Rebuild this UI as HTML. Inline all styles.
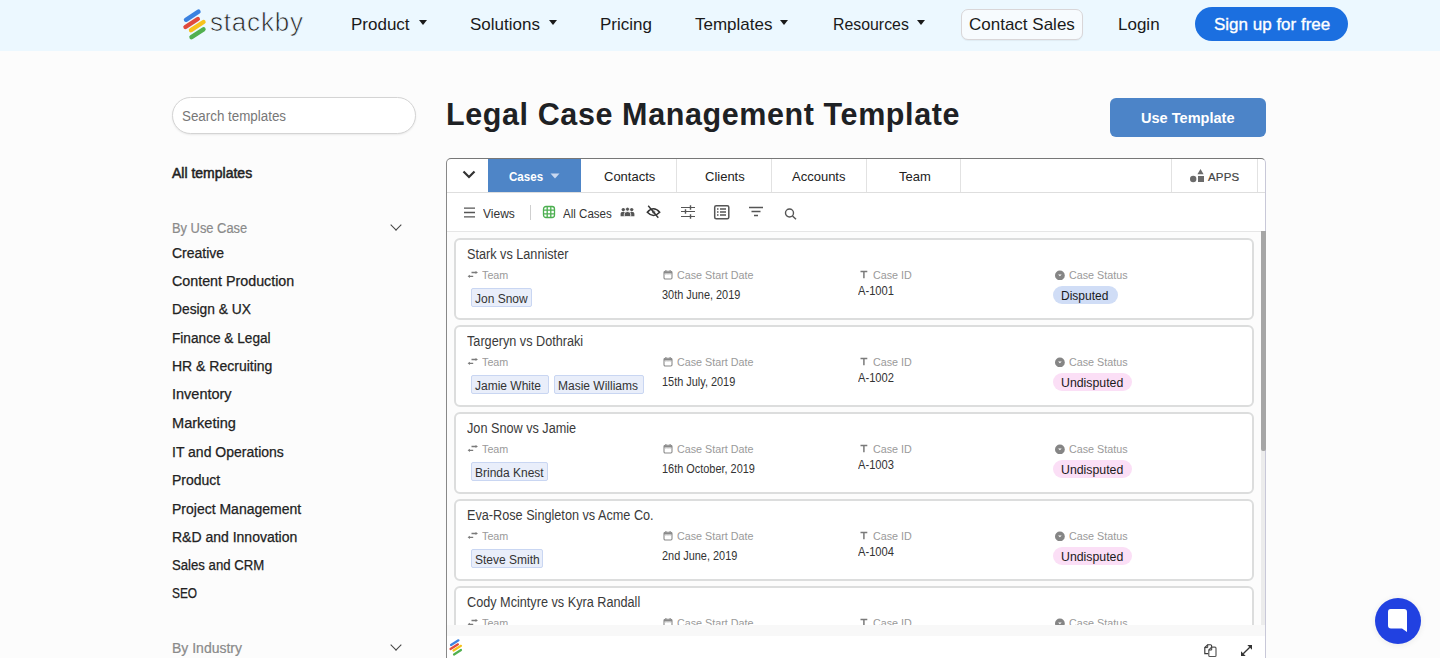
<!DOCTYPE html>
<html><head><meta charset="utf-8">
<style>
*{box-sizing:border-box;margin:0;padding:0}
html,body{width:1440px;height:658px;overflow:hidden;background:#fcfcfc;font-family:"Liberation Sans",sans-serif;color:#222}
.abs{position:absolute;white-space:nowrap}
#nav{position:absolute;left:0;top:0;width:1440px;height:51px;background:#ecf8ff}
.ni{position:absolute;top:15px;font-size:17px;line-height:20px;color:#1a1a1a}
.caret{position:absolute;width:0;height:0;border-left:4px solid transparent;border-right:4px solid transparent;border-top:5px solid #1a1a1a}
#contact{position:absolute;left:961px;top:9px;width:122px;height:31px;border:1px solid #d9d6d8;border-radius:7px;background:#f7fbfe;box-shadow:0 1px 1px rgba(0,0,0,.05)}
#signup{position:absolute;left:1195px;top:7px;width:153px;height:34px;border-radius:17px;background:#1b6fe0;color:#fff}
#search{position:absolute;left:172px;top:97px;width:244px;height:37px;border:1px solid #d4d4d4;border-radius:19px;background:#fff;box-shadow:0 1px 2px rgba(0,0,0,.08)}
.side{position:absolute;left:172px;font-size:14px;line-height:16px;color:#222;-webkit-text-stroke:0.25px #222}
.sec{color:#8a8a8a;-webkit-text-stroke:0.2px #8a8a8a;transform-origin:0 0;transform:scaleX(0.92)}
.chev{position:absolute;width:8px;height:8px;border-right:1.3px solid #444;border-bottom:1.3px solid #444;transform:rotate(45deg)}
#title{position:absolute;left:446px;top:96px;font-size:30.5px;line-height:36px;letter-spacing:0.6px;font-weight:bold;color:#1e2124}
#usebtn{position:absolute;left:1110px;top:98px;width:156px;height:39px;border-radius:6px;background:#4c84c8;color:#fff;font-size:15px;font-weight:bold}
#frame{position:absolute;left:446px;top:158px;width:820px;height:500px;border:1px solid #888;border-top-color:#777;border-right-color:#c8c8d8;border-bottom:none;border-radius:5px 5px 0 0;background:#fff;overflow:hidden}
.tab{top:169px;font-size:13px;line-height:15px;color:#222}
.vdiv{position:absolute;top:159px;width:1px;height:33px;background:#e2e2e2}
.tb{top:207px;font-size:12.5px;line-height:15px;color:#333}
.card{position:absolute;left:7px;width:800px;background:#fff;border:2px solid #dcdddd;border-radius:6px}
.card .ic{position:absolute}
.ct{position:absolute;left:10.5px;top:6px;font-size:14px;line-height:16px;transform-origin:0 0;transform:scaleX(0.905);color:#3a3a3a;white-space:nowrap}
.cl{position:absolute;top:27.5px;font-size:11.5px;line-height:14px;transform-origin:0 0;transform:scaleX(0.935);color:#9a9a9a;white-space:nowrap}
.chip{position:absolute;top:48px;height:19px;background:#e9eefa;border:1px solid #c9d6f2;border-radius:2px;font-size:12px;line-height:20px;color:#333;padding-left:3px;white-space:nowrap}
.cd{position:absolute;left:206px;top:48px;font-size:12px;line-height:14px;transform-origin:0 0;transform:scaleX(0.91);color:#333;white-space:nowrap}
.cid{position:absolute;left:401.5px;top:44px;font-size:12px;line-height:14px;transform-origin:0 0;transform:scaleX(0.93);color:#333;white-space:nowrap}
.pill{position:absolute;left:597px;top:46px;height:18px;border-radius:9px;font-size:12px;line-height:18px;color:#1a1a1a;padding-left:8px;white-space:nowrap}
.pill span{display:inline-block;position:relative;top:1px}
.blue{background:#d0ddf6}.pink{background:#fbdff6}
</style></head>
<body>
<div id="nav">
  <svg class="abs" style="left:180px;top:6px" width="30" height="36" viewBox="0 0 30 36">
    <g stroke-linecap="round" stroke-width="4.4">
      <line x1="6" y1="13.8" x2="18.5" y2="5.6" stroke="#3b82e0"/>
      <line x1="5.5" y1="21" x2="17.8" y2="13" stroke="#e04a3c"/>
      <line x1="11" y1="24.2" x2="23.5" y2="16" stroke="#f7c21c"/>
      <line x1="11.5" y1="31.2" x2="23.5" y2="23.3" stroke="#52b04f"/>
    </g>
  </svg>
  <div class="abs" style="left:210px;top:6.5px;font-size:26px;line-height:30px;color:#222;letter-spacing:0.8px;-webkit-text-stroke:0.7px #ecf8ff">stackby</div>
  <div class="ni" style="left:351px">Product</div><div class="caret" style="left:419px;top:20px"></div>
  <div class="ni" style="left:470px">Solutions</div><div class="caret" style="left:549px;top:20px"></div>
  <div class="ni" style="left:600px">Pricing</div>
  <div class="ni" style="left:695px">Templates</div><div class="caret" style="left:780px;top:20px"></div>
  <div class="ni" style="left:832.5px;transform-origin:0 0;transform:scaleX(0.933)">Resources</div><div class="caret" style="left:917px;top:20px"></div>
  <div id="contact"></div>
  <div class="ni" style="left:969px">Contact Sales</div>
  <div class="ni" style="left:1118px">Login</div>
  <div id="signup"></div>
  <div class="ni" style="left:1214px;color:#fff;-webkit-text-stroke:0.35px #fff">Sign up for free</div>
</div>

<div id="search"></div>
<div class="side" style="left:181.5px;top:108px;color:#777;-webkit-text-stroke:0;transform-origin:0 0;transform:scaleX(0.955)">Search templates</div>
<div class="side" style="top:165px;-webkit-text-stroke:0.5px #222">All templates</div>
<div class="side sec" style="top:220px">By Use Case</div>
<div class="chev" style="left:392px;top:221px"></div>
<div class="side" style="top:245px">Creative</div>
<div class="side" style="top:273px;transform-origin:0 0;transform:scaleX(1.02)">Content Production</div>
<div class="side" style="top:301px;transform-origin:0 0;transform:scaleX(0.985)">Design &amp; UX</div>
<div class="side" style="top:330px;transform-origin:0 0;transform:scaleX(0.975)">Finance &amp; Legal</div>
<div class="side" style="top:358px">HR &amp; Recruiting</div>
<div class="side" style="top:386px;transform-origin:0 0;transform:scaleX(1.035)">Inventory</div>
<div class="side" style="top:415px;transform-origin:0 0;transform:scaleX(1.04)">Marketing</div>
<div class="side" style="top:444px">IT and Operations</div>
<div class="side" style="top:472px">Product</div>
<div class="side" style="top:501px">Project Management</div>
<div class="side" style="top:529px">R&amp;D and Innovation</div>
<div class="side" style="top:557px;transform-origin:0 0;transform:scaleX(0.94)">Sales and CRM</div>
<div class="side" style="top:585px;transform-origin:0 0;transform:scaleX(0.85)">SEO</div>
<div class="side sec" style="top:640px;transform:none">By Industry</div>
<div class="chev" style="left:392px;top:641px"></div>

<div id="title">Legal Case Management Template</div>
<div id="usebtn"></div>
<div class="abs" style="left:1141px;top:109px;font-size:15px;line-height:17px;font-weight:bold;color:#fff;transform-origin:0 0;transform:scaleX(0.97)">Use Template</div>

<div id="frame"></div>
<!-- tab bar -->
<svg class="abs" style="left:462px;top:169px" width="14" height="11" viewBox="0 0 14 11"><path d="M1.5 2.5 L7 8 L12.5 2.5" fill="none" stroke="#333" stroke-width="2.2"/></svg>
<div class="abs" style="left:488px;top:159px;width:93px;height:33px;background:#4e85c7"></div>
<div class="abs tab" style="left:509px;color:#fff;font-weight:bold;transform-origin:0 0;transform:scaleX(0.89)">Cases</div>
<svg class="abs" style="left:550px;top:173px" width="10" height="6" viewBox="0 0 10 6"><path d="M0.5 0.5 L9.5 0.5 L5 5.5 Z" fill="#c9d8f0"/></svg>
<div class="vdiv" style="left:676px"></div>
<div class="vdiv" style="left:771px"></div>
<div class="vdiv" style="left:866px"></div>
<div class="vdiv" style="left:960px"></div>
<div class="vdiv" style="left:1171px"></div>
<div class="vdiv" style="left:1257px"></div>
<div class="abs tab" style="left:604px">Contacts</div>
<div class="abs tab" style="left:705px">Clients</div>
<div class="abs tab" style="left:792px">Accounts</div>
<div class="abs tab" style="left:899px">Team</div>
<svg class="abs" style="left:1189px;top:168px" width="16" height="16" viewBox="0 0 16 16"><circle cx="4.2" cy="11" r="3.2" fill="#6b6b6b"/><path d="M11.5 1 L14.6 6.3 L8.4 6.3 Z" fill="#6b6b6b"/><rect x="9" y="8" width="6" height="6" fill="#6b6b6b"/></svg>
<div class="abs tab" style="left:1208px;top:170px;color:#444;font-size:11.5px;letter-spacing:0.2px;-webkit-text-stroke:0.2px #444">APPS</div>
<div class="abs" style="left:447px;top:192px;width:818px;height:1px;background:#dedede"></div>
<!-- toolbar -->
<svg class="abs" style="left:463px;top:207px" width="13" height="12" viewBox="0 0 13 12"><path d="M1 1.2H12M1 5.5H12M1 9.8H12" stroke="#555" stroke-width="1.3"/></svg>
<div class="abs tb" style="left:483px;transform-origin:0 0;transform:scaleX(0.96)">Views</div>
<div class="abs" style="left:530px;top:205px;width:1px;height:15px;background:#cfcfcf"></div>
<svg class="abs" style="left:542px;top:205px" width="14" height="14" viewBox="0 0 14 14"><rect x="1.5" y="1.5" width="11" height="11" rx="2.5" fill="none" stroke="#4caf50" stroke-width="1.3"/><path d="M5.2 1.5V12.5M8.8 1.5V12.5M1.5 5.2H12.5M1.5 8.8H12.5" stroke="#4caf50" stroke-width="1.3"/></svg>
<div class="abs tb" style="left:563px;transform-origin:0 0;transform:scaleX(0.925)">All Cases</div>
<svg class="abs" style="left:620px;top:207px" width="15" height="10" viewBox="0 0 15 10"><g fill="#555"><circle cx="3.3" cy="2.6" r="1.7"/><circle cx="11.7" cy="2.6" r="1.7"/><path d="M0.6 9.3 V6.8 Q0.6 4.7 3.3 4.7 Q6 4.7 6 6.8 V9.3Z"/><path d="M9 9.3 V6.8 Q9 4.7 11.7 4.7 Q14.4 4.7 14.4 6.8 V9.3Z"/></g><g fill="#555" stroke="#fff" stroke-width="0.8"><circle cx="7.5" cy="2.2" r="2"/><path d="M4.3 9.6 V6.9 Q4.3 4.5 7.5 4.5 Q10.7 4.5 10.7 6.9 V9.6Z"/></g></svg>
<svg class="abs" style="left:646px;top:205px" width="15" height="14" viewBox="0 0 15 14"><path d="M1.3 7.2 Q7.5 0.2 13.7 7.2 Q7.5 13.6 1.3 7.2Z" fill="none" stroke="#333" stroke-width="1.5"/><circle cx="7.6" cy="7" r="1.3" fill="none" stroke="#777" stroke-width="0.9"/><path d="M2.2 0.8 L12.3 12.8" stroke="#333" stroke-width="1.4"/></svg>
<svg class="abs" style="left:681px;top:205px" width="14" height="14" viewBox="0 0 14 14"><path d="M0 2.5H14M0 6.5H14M0 11.5H14" stroke="#555" stroke-width="1.1"/><path d="M9.5 0.3V4.7M4.5 4.3V8.7M9.5 9.3V13.7" stroke="#555" stroke-width="1.4"/></svg>
<svg class="abs" style="left:713px;top:204px" width="17" height="16" viewBox="0 0 17 16"><rect x="1.7" y="1.7" width="14.1" height="13.1" rx="1.5" fill="none" stroke="#555" stroke-width="1.5"/><path d="M4 5H5.5M4 8H5.5M4 11H5.5M7 5H13M7 8H13M7 11H13" stroke="#555" stroke-width="1.4"/></svg>
<svg class="abs" style="left:748px;top:206px" width="16" height="12" viewBox="0 0 16 12"><path d="M1 1.5H15M3.5 5.5H12.5M6 9.5H10" stroke="#555" stroke-width="1.5"/></svg>
<svg class="abs" style="left:784px;top:208px" width="14" height="12" viewBox="0 0 14 12"><circle cx="5.5" cy="5" r="4" fill="none" stroke="#555" stroke-width="1.4"/><path d="M8.5 8 L12 11.2" stroke="#555" stroke-width="1.5"/></svg>
<div class="abs" style="left:447px;top:231px;width:818px;height:1px;background:#e6e6e6"></div>
<!-- scroll area -->
<div class="abs" style="left:447px;top:232px;width:814px;height:393px;background:#fcfcfc;overflow:hidden">
<!--CARDS-->
<div class="card" style="top:6px;height:82px">
<div class="ct">Stark vs Lannister</div>
<svg class="ic" style="left:11px;top:31px" width="12" height="8" viewBox="0 0 12 8"><path d="M4.5 1.5H9M2.2 5.3H6.2" stroke="#7a7a7a" stroke-width="1.3"/><path d="M8.6 -0.1L10.9 1.5L8.6 3.1Z M0.6 5.3L2.9 3.7L2.9 6.9Z" fill="#7a7a7a"/></svg><div class="cl" style="left:25.5px">Team</div>
<svg class="ic" style="left:207px;top:29px" width="10" height="11" viewBox="0 0 10 11"><rect x="1" y="2.2" width="8" height="7.8" rx="1.2" fill="none" stroke="#8a8a8a" stroke-width="1.1"/><path d="M1 3.6H9" stroke="#8a8a8a" stroke-width="1.8"/><path d="M2.9 1V2.8M7.1 1V2.8" stroke="#8a8a8a" stroke-width="1"/><path d="M2.4 5.3h1M4.5 5.3h1M6.6 5.3h1" stroke="#aaa" stroke-width="0.8"/></svg><div class="cl" style="left:221px">Case Start Date</div>
<svg class="ic" style="left:404px;top:30px" width="8" height="9" viewBox="0 0 8 9"><path d="M0.5 1.6H7.3M3.9 1.6V8.3" stroke="#7a7a7a" stroke-width="1.5"/></svg><div class="cl" style="left:416.5px">Case ID</div>
<svg class="ic" style="left:598px;top:29px" width="11" height="11" viewBox="0 0 11 11"><circle cx="5.9" cy="6.4" r="4.9" fill="#858585"/><path d="M4.1 5.4 H7.7 L5.9 7.3Z" fill="#fff"/></svg><div class="cl" style="left:612.5px">Case Status</div>
<div class="chip" style="left:15px;width:61px">Jon Snow</div>
<div class="cd">30th June, 2019</div>
<div class="cid">A-1001</div>
<div class="pill blue" style="width:65px"><span>Disputed</span></div>
</div>
<div class="card" style="top:93px;height:82px">
<div class="ct">Targeryn vs Dothraki</div>
<svg class="ic" style="left:11px;top:31px" width="12" height="8" viewBox="0 0 12 8"><path d="M4.5 1.5H9M2.2 5.3H6.2" stroke="#7a7a7a" stroke-width="1.3"/><path d="M8.6 -0.1L10.9 1.5L8.6 3.1Z M0.6 5.3L2.9 3.7L2.9 6.9Z" fill="#7a7a7a"/></svg><div class="cl" style="left:25.5px">Team</div>
<svg class="ic" style="left:207px;top:29px" width="10" height="11" viewBox="0 0 10 11"><rect x="1" y="2.2" width="8" height="7.8" rx="1.2" fill="none" stroke="#8a8a8a" stroke-width="1.1"/><path d="M1 3.6H9" stroke="#8a8a8a" stroke-width="1.8"/><path d="M2.9 1V2.8M7.1 1V2.8" stroke="#8a8a8a" stroke-width="1"/><path d="M2.4 5.3h1M4.5 5.3h1M6.6 5.3h1" stroke="#aaa" stroke-width="0.8"/></svg><div class="cl" style="left:221px">Case Start Date</div>
<svg class="ic" style="left:404px;top:30px" width="8" height="9" viewBox="0 0 8 9"><path d="M0.5 1.6H7.3M3.9 1.6V8.3" stroke="#7a7a7a" stroke-width="1.5"/></svg><div class="cl" style="left:416.5px">Case ID</div>
<svg class="ic" style="left:598px;top:29px" width="11" height="11" viewBox="0 0 11 11"><circle cx="5.9" cy="6.4" r="4.9" fill="#858585"/><path d="M4.1 5.4 H7.7 L5.9 7.3Z" fill="#fff"/></svg><div class="cl" style="left:612.5px">Case Status</div>
<div class="chip" style="left:15px;width:78px">Jamie White</div>
<div class="chip" style="left:98px;width:90px">Masie Williams</div>
<div class="cd">15th July, 2019</div>
<div class="cid">A-1002</div>
<div class="pill pink" style="width:79px"><span style="transform:scaleX(1.025);transform-origin:0 0">Undisputed</span></div>
</div>
<div class="card" style="top:180px;height:82px">
<div class="ct">Jon Snow vs Jamie</div>
<svg class="ic" style="left:11px;top:31px" width="12" height="8" viewBox="0 0 12 8"><path d="M4.5 1.5H9M2.2 5.3H6.2" stroke="#7a7a7a" stroke-width="1.3"/><path d="M8.6 -0.1L10.9 1.5L8.6 3.1Z M0.6 5.3L2.9 3.7L2.9 6.9Z" fill="#7a7a7a"/></svg><div class="cl" style="left:25.5px">Team</div>
<svg class="ic" style="left:207px;top:29px" width="10" height="11" viewBox="0 0 10 11"><rect x="1" y="2.2" width="8" height="7.8" rx="1.2" fill="none" stroke="#8a8a8a" stroke-width="1.1"/><path d="M1 3.6H9" stroke="#8a8a8a" stroke-width="1.8"/><path d="M2.9 1V2.8M7.1 1V2.8" stroke="#8a8a8a" stroke-width="1"/><path d="M2.4 5.3h1M4.5 5.3h1M6.6 5.3h1" stroke="#aaa" stroke-width="0.8"/></svg><div class="cl" style="left:221px">Case Start Date</div>
<svg class="ic" style="left:404px;top:30px" width="8" height="9" viewBox="0 0 8 9"><path d="M0.5 1.6H7.3M3.9 1.6V8.3" stroke="#7a7a7a" stroke-width="1.5"/></svg><div class="cl" style="left:416.5px">Case ID</div>
<svg class="ic" style="left:598px;top:29px" width="11" height="11" viewBox="0 0 11 11"><circle cx="5.9" cy="6.4" r="4.9" fill="#858585"/><path d="M4.1 5.4 H7.7 L5.9 7.3Z" fill="#fff"/></svg><div class="cl" style="left:612.5px">Case Status</div>
<div class="chip" style="left:15px;width:77px">Brinda Knest</div>
<div class="cd">16th October, 2019</div>
<div class="cid">A-1003</div>
<div class="pill pink" style="width:79px"><span style="transform:scaleX(1.025);transform-origin:0 0">Undisputed</span></div>
</div>
<div class="card" style="top:267px;height:82px">
<div class="ct">Eva-Rose Singleton vs Acme Co.</div>
<svg class="ic" style="left:11px;top:31px" width="12" height="8" viewBox="0 0 12 8"><path d="M4.5 1.5H9M2.2 5.3H6.2" stroke="#7a7a7a" stroke-width="1.3"/><path d="M8.6 -0.1L10.9 1.5L8.6 3.1Z M0.6 5.3L2.9 3.7L2.9 6.9Z" fill="#7a7a7a"/></svg><div class="cl" style="left:25.5px">Team</div>
<svg class="ic" style="left:207px;top:29px" width="10" height="11" viewBox="0 0 10 11"><rect x="1" y="2.2" width="8" height="7.8" rx="1.2" fill="none" stroke="#8a8a8a" stroke-width="1.1"/><path d="M1 3.6H9" stroke="#8a8a8a" stroke-width="1.8"/><path d="M2.9 1V2.8M7.1 1V2.8" stroke="#8a8a8a" stroke-width="1"/><path d="M2.4 5.3h1M4.5 5.3h1M6.6 5.3h1" stroke="#aaa" stroke-width="0.8"/></svg><div class="cl" style="left:221px">Case Start Date</div>
<svg class="ic" style="left:404px;top:30px" width="8" height="9" viewBox="0 0 8 9"><path d="M0.5 1.6H7.3M3.9 1.6V8.3" stroke="#7a7a7a" stroke-width="1.5"/></svg><div class="cl" style="left:416.5px">Case ID</div>
<svg class="ic" style="left:598px;top:29px" width="11" height="11" viewBox="0 0 11 11"><circle cx="5.9" cy="6.4" r="4.9" fill="#858585"/><path d="M4.1 5.4 H7.7 L5.9 7.3Z" fill="#fff"/></svg><div class="cl" style="left:612.5px">Case Status</div>
<div class="chip" style="left:15px;width:72px">Steve Smith</div>
<div class="cd">2nd June, 2019</div>
<div class="cid">A-1004</div>
<div class="pill pink" style="width:79px"><span style="transform:scaleX(1.025);transform-origin:0 0">Undisputed</span></div>
</div>
<div class="card" style="top:354px;height:60px">
<div class="ct">Cody Mcintyre vs Kyra Randall</div>
<svg class="ic" style="left:11px;top:31px" width="12" height="8" viewBox="0 0 12 8"><path d="M4.5 1.5H9M2.2 5.3H6.2" stroke="#7a7a7a" stroke-width="1.3"/><path d="M8.6 -0.1L10.9 1.5L8.6 3.1Z M0.6 5.3L2.9 3.7L2.9 6.9Z" fill="#7a7a7a"/></svg><div class="cl" style="left:25.5px">Team</div>
<svg class="ic" style="left:207px;top:29px" width="10" height="11" viewBox="0 0 10 11"><rect x="1" y="2.2" width="8" height="7.8" rx="1.2" fill="none" stroke="#8a8a8a" stroke-width="1.1"/><path d="M1 3.6H9" stroke="#8a8a8a" stroke-width="1.8"/><path d="M2.9 1V2.8M7.1 1V2.8" stroke="#8a8a8a" stroke-width="1"/><path d="M2.4 5.3h1M4.5 5.3h1M6.6 5.3h1" stroke="#aaa" stroke-width="0.8"/></svg><div class="cl" style="left:221px">Case Start Date</div>
<svg class="ic" style="left:404px;top:30px" width="8" height="9" viewBox="0 0 8 9"><path d="M0.5 1.6H7.3M3.9 1.6V8.3" stroke="#7a7a7a" stroke-width="1.5"/></svg><div class="cl" style="left:416.5px">Case ID</div>
<svg class="ic" style="left:598px;top:29px" width="11" height="11" viewBox="0 0 11 11"><circle cx="5.9" cy="6.4" r="4.9" fill="#858585"/><path d="M4.1 5.4 H7.7 L5.9 7.3Z" fill="#fff"/></svg><div class="cl" style="left:612.5px">Case Status</div>
</div>
<!--/CARDS-->
</div>
<div class="abs" style="left:1261px;top:232px;width:4px;height:393px;background:#ececec"></div>
<div class="abs" style="left:1261px;top:231px;width:5px;height:220px;background:#a6a6a6;border-radius:0 0 2px 2px"></div>
<div class="abs" style="left:447px;top:625px;width:818px;height:11px;background:#f8f8f8"></div>
<div class="abs" style="left:447px;top:636px;width:818px;height:22px;background:#fff"></div>
<svg class="abs" style="left:448px;top:638px" width="15" height="19" viewBox="0 0 15 19"><g stroke-linecap="round" stroke-width="2.2"><line x1="3" y1="7" x2="10.5" y2="2.3" stroke="#3b82e0"/><line x1="2.5" y1="11" x2="10" y2="6.3" stroke="#e04a3c"/><line x1="5.5" y1="12.5" x2="13" y2="7.8" stroke="#f7c21c"/><line x1="6" y1="16.5" x2="13" y2="12" stroke="#52b04f"/></g></svg>
<svg class="abs" style="left:1203px;top:643px" width="15" height="15" viewBox="0 0 15 15"><path d="M5.4 10.6 H1.8 V4.6 L4.7 1.7 H7.5 Q8.6 1.7 8.6 2.8 V4.2" fill="none" stroke="#3a3a3a" stroke-width="1.15"/><path d="M1.8 4.6 H4.7 V1.7" fill="none" stroke="#3a3a3a" stroke-width="1"/><path d="M5.8 12.4 V7 L8.7 4.1 H11.9 Q13 4.1 13 5.2 V12.4 Q13 13.5 11.9 13.5 H6.9 Q5.8 13.5 5.8 12.4Z" fill="#fff" stroke="#555" stroke-width="1.15"/><path d="M5.8 7 H8.7 V4.1" fill="none" stroke="#3a3a3a" stroke-width="1"/></svg>
<svg class="abs" style="left:1240px;top:644px" width="13" height="13" viewBox="0 0 13 13"><path d="M3.2 9.8 L9.8 3.2" stroke="#333" stroke-width="1.3"/><path d="M7.3 1 H12 V5.7 Z M1 7.3 V12 H5.7 Z" fill="#333"/></svg>
<!-- chat -->
<div class="abs" style="left:1375px;top:598px;width:46px;height:46px;border-radius:50%;background:#2141e1;box-shadow:0 1px 6px rgba(0,0,0,.08)"></div>
<svg class="abs" style="left:1387px;top:608px" width="21" height="25" viewBox="0 0 21 25"><path d="M3.5 1 H17 Q20 1 20 4 V24 L15 20.5 H4 Q1 20.5 1 17.5 V4 Q1 1 3.5 1Z" fill="#fff"/></svg>


</body></html>
